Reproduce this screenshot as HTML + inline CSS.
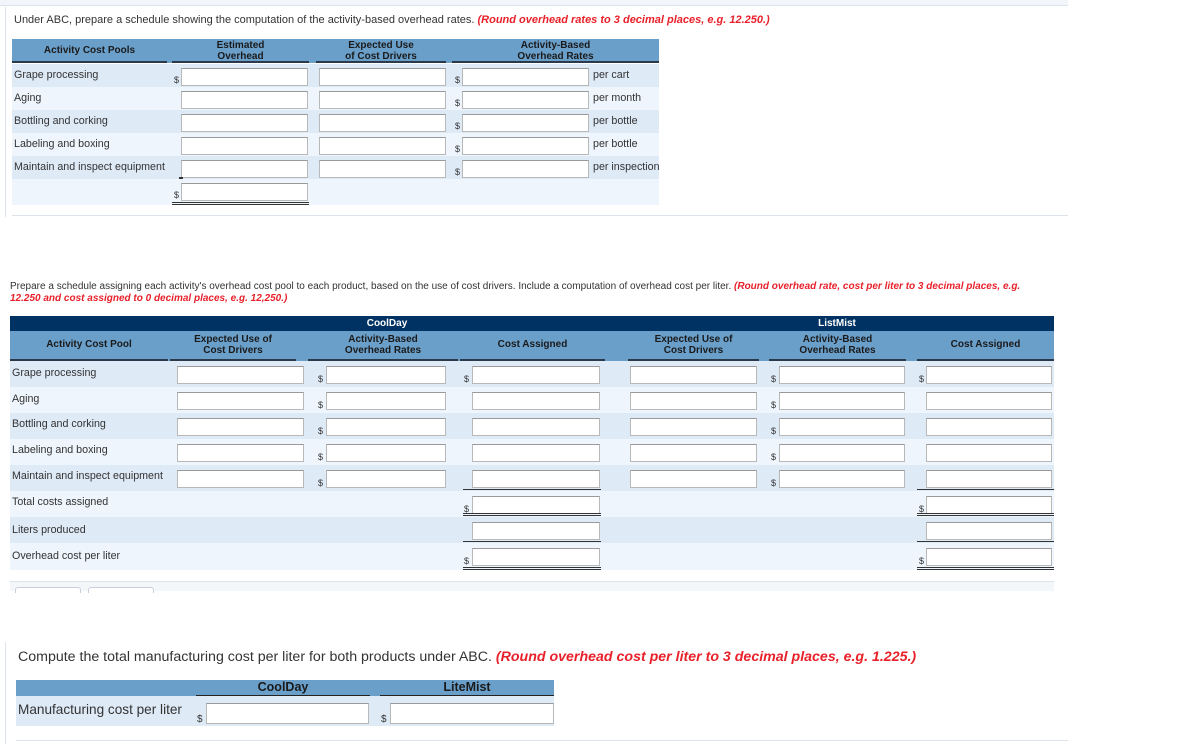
<!DOCTYPE html>
<html><head><meta charset="utf-8"><style>
*{margin:0;padding:0;box-sizing:border-box}
body{width:1202px;height:744px;background:#fff;position:relative;overflow:hidden;font-family:"Liberation Sans",sans-serif;font-size:10px;color:#333}
div,span{position:absolute}
.hd{background:#6a9fca;color:#1a1a1a;font-weight:bold;text-align:center;line-height:11px;font-size:10px}
.ul{border-bottom:2px solid #2b3a4a}
.r1{background:#dfeaf7}.r2{background:#eef5fc}
.in{background:#fff;border:1px solid #b8b8b8;border-top-color:#999;height:18px}
.d{font-size:9px;color:#333}
.red{color:#e8212b;font-weight:bold;font-style:italic}
.lb{font-size:10.7px;color:#333}
.dl{border-bottom:3px double #333}
.sl{border-bottom:1.5px solid #333}
</style></head><body>
<!-- Section 1 -->
<div style="left:0;top:0;width:1068px;height:6px;background:#f2f6fa;border-bottom:1px solid #dde3ea"></div>
<div style="left:5px;top:7px;width:1px;height:210px;background:#dde3ea"></div>
<div style="left:12px;top:215px;width:1056px;height:1px;background:#dde3ea"></div>
<div style="left:14px;top:14px;white-space:nowrap;font-size:11px">Under ABC, prepare a schedule showing the computation of the activity-based overhead rates. <span class="red" style="position:static">(Round overhead rates to 3 decimal places, e.g. 12.250.)</span></div>
<div class="hd" style="left:12px;top:39px;width:647px;height:24px"></div>
<div class="hd ul" style="left:12px;top:39px;width:155px;height:24px;line-height:24px">Activity Cost Pools</div>
<div class="hd ul" style="left:172px;top:39px;width:137px;height:24px;padding-top:1px">Estimated<br>Overhead</div>
<div class="hd ul" style="left:316px;top:39px;width:130px;height:24px;padding-top:1px">Expected Use<br>of Cost Drivers</div>
<div class="hd ul" style="left:452px;top:39px;width:207px;height:24px;padding-top:1px">Activity-Based<br>Overhead Rates</div>
<div class="r1" style="left:12px;top:64px;width:647px;height:23px"></div>
<div class="r2" style="left:12px;top:87px;width:647px;height:23px"></div>
<div class="r1" style="left:12px;top:110px;width:647px;height:23px"></div>
<div class="r2" style="left:12px;top:133px;width:647px;height:23px"></div>
<div class="r1" style="left:12px;top:156px;width:647px;height:23px"></div>
<div class="r2" style="left:12px;top:179px;width:647px;height:26px"></div>
<div class="lb" style="left:14px;top:69px">Grape processing</div>
<div class="lb" style="left:14px;top:92px">Aging</div>
<div class="lb" style="left:14px;top:115px">Bottling and corking</div>
<div class="lb" style="left:14px;top:138px">Labeling and boxing</div>
<div class="lb" style="left:14px;top:161px">Maintain and inspect equipment</div>
<div class="d" style="left:174px;top:75px">$</div>
<div class="in" style="left:181px;top:68px;width:127px"></div>
<div class="in" style="left:181px;top:91px;width:127px"></div>
<div class="in" style="left:181px;top:114px;width:127px"></div>
<div class="in" style="left:181px;top:137px;width:127px"></div>
<div class="in" style="left:181px;top:160px;width:127px"></div>
<div style="left:179px;top:177px;width:4px;height:2px;background:#333"></div>
<div class="d" style="left:174px;top:190px">$</div>
<div class="in" style="left:181px;top:183px;width:127px"></div>
<div style="left:172px;top:202px;width:137px;height:3px;border-bottom:3px double #333"></div>
<div class="in" style="left:319px;top:68px;width:127px"></div>
<div class="in" style="left:319px;top:91px;width:127px"></div>
<div class="in" style="left:319px;top:114px;width:127px"></div>
<div class="in" style="left:319px;top:137px;width:127px"></div>
<div class="in" style="left:319px;top:160px;width:127px"></div>
<div class="d" style="left:455px;top:75px">$</div><div class="d" style="left:455px;top:98px">$</div><div class="d" style="left:455px;top:121px">$</div><div class="d" style="left:455px;top:144px">$</div><div class="d" style="left:455px;top:167px">$</div>
<div class="in" style="left:462px;top:68px;width:127px"></div>
<div class="in" style="left:462px;top:91px;width:127px"></div>
<div class="in" style="left:462px;top:114px;width:127px"></div>
<div class="in" style="left:462px;top:137px;width:127px"></div>
<div class="in" style="left:462px;top:160px;width:127px"></div>
<div class="lb" style="left:593px;top:69px">per cart</div>
<div class="lb" style="left:593px;top:92px">per month</div>
<div class="lb" style="left:593px;top:115px">per bottle</div>
<div class="lb" style="left:593px;top:138px">per bottle</div>
<div class="lb" style="left:593px;top:161px">per inspection</div>

<!-- Section 2 -->
<div style="left:10px;top:281px;width:1030px;line-height:12px">Prepare a schedule assigning each activity's overhead cost pool to each product, based on the use of cost drivers. Include a computation of overhead cost per liter. <span class="red" style="position:static">(Round overhead rate, cost per liter to 3 decimal places, e.g. 12.250 and cost assigned to 0 decimal places, e.g. 12,250.)</span></div>
<div style="left:10px;top:316px;width:1044px;height:15px;background:#003264"></div>
<div style="left:312px;top:318px;width:150px;text-align:center;color:#fff;font-weight:bold;font-size:10px">CoolDay</div>
<div style="left:767px;top:318px;width:140px;text-align:center;color:#fff;font-weight:bold;font-size:10px">ListMist</div>
<div class="hd" style="left:10px;top:331px;width:1044px;height:30px"></div>
<div class="hd ul" style="left:10px;top:331px;width:158px;height:30px;line-height:28px">Activity Cost Pool</div>
<div class="hd ul" style="left:170px;top:331px;width:126px;height:30px;padding-top:3px">Expected Use of<br>Cost Drivers</div>
<div class="hd ul" style="left:308px;top:331px;width:150px;height:30px;padding-top:3px">Activity-Based<br>Overhead Rates</div>
<div class="hd ul" style="left:460px;top:331px;width:145px;height:30px;line-height:28px">Cost Assigned</div>
<div class="hd ul" style="left:628px;top:331px;width:131px;height:30px;padding-top:3px">Expected Use of<br>Cost Drivers</div>
<div class="hd ul" style="left:769px;top:331px;width:137px;height:30px;padding-top:3px">Activity-Based<br>Overhead Rates</div>
<div class="hd ul" style="left:917px;top:331px;width:137px;height:30px;line-height:28px">Cost Assigned</div>
<div class="r1" style="left:10px;top:361px;width:1044px;height:26px"></div>
<div class="r2" style="left:10px;top:387px;width:1044px;height:26px"></div>
<div class="r1" style="left:10px;top:413px;width:1044px;height:26px"></div>
<div class="r2" style="left:10px;top:439px;width:1044px;height:26px"></div>
<div class="r1" style="left:10px;top:465px;width:1044px;height:26px"></div>
<div class="r2" style="left:10px;top:491px;width:1044px;height:26px"></div>
<div class="r1" style="left:10px;top:517px;width:1044px;height:26px"></div>
<div class="r2" style="left:10px;top:543px;width:1044px;height:27px"></div>
<div class="lb" style="left:12px;top:367px">Grape processing</div>
<div class="lb" style="left:12px;top:393px">Aging</div>
<div class="lb" style="left:12px;top:418px">Bottling and corking</div>
<div class="lb" style="left:12px;top:444px">Labeling and boxing</div>
<div class="lb" style="left:12px;top:470px">Maintain and inspect equipment</div>
<div class="lb" style="left:12px;top:496px">Total costs assigned</div>
<div class="lb" style="left:12px;top:524px">Liters produced</div>
<div class="lb" style="left:12px;top:550px">Overhead cost per liter</div>
<div class="in" style="left:177px;top:366px;width:127px"></div>
<div class="in" style="left:177px;top:392px;width:127px"></div>
<div class="in" style="left:177px;top:418px;width:127px"></div>
<div class="in" style="left:177px;top:444px;width:127px"></div>
<div class="in" style="left:177px;top:470px;width:127px"></div>
<div class="d" style="left:318px;top:374px">$</div><div class="d" style="left:318px;top:400px">$</div><div class="d" style="left:318px;top:426px">$</div><div class="d" style="left:318px;top:452px">$</div><div class="d" style="left:318px;top:478px">$</div>
<div class="in" style="left:326px;top:366px;width:120px"></div>
<div class="in" style="left:326px;top:392px;width:120px"></div>
<div class="in" style="left:326px;top:418px;width:120px"></div>
<div class="in" style="left:326px;top:444px;width:120px"></div>
<div class="in" style="left:326px;top:470px;width:120px"></div>
<div class="d" style="left:464px;top:374px">$</div>
<div class="in" style="left:472px;top:366px;width:128px"></div>
<div class="in" style="left:472px;top:392px;width:128px"></div>
<div class="in" style="left:472px;top:418px;width:128px"></div>
<div class="in" style="left:472px;top:444px;width:128px"></div>
<div class="in" style="left:472px;top:470px;width:128px"></div>
<div class="sl" style="left:463px;top:488px;width:138px;height:2px"></div>
<div class="d" style="left:464px;top:504px">$</div>
<div class="in" style="left:472px;top:496px;width:128px"></div>
<div class="dl" style="left:463px;top:512px;width:138px;height:4px"></div>
<div class="in" style="left:472px;top:522px;width:128px"></div>
<div class="sl" style="left:463px;top:540px;width:138px;height:2px"></div>
<div class="d" style="left:464px;top:556px">$</div>
<div class="in" style="left:472px;top:548px;width:128px"></div>
<div class="dl" style="left:463px;top:566px;width:138px;height:4px"></div>
<div class="in" style="left:630px;top:366px;width:127px"></div>
<div class="in" style="left:630px;top:392px;width:127px"></div>
<div class="in" style="left:630px;top:418px;width:127px"></div>
<div class="in" style="left:630px;top:444px;width:127px"></div>
<div class="in" style="left:630px;top:470px;width:127px"></div>
<div class="d" style="left:771px;top:374px">$</div><div class="d" style="left:771px;top:400px">$</div><div class="d" style="left:771px;top:426px">$</div><div class="d" style="left:771px;top:452px">$</div><div class="d" style="left:771px;top:478px">$</div>
<div class="in" style="left:779px;top:366px;width:126px"></div>
<div class="in" style="left:779px;top:392px;width:126px"></div>
<div class="in" style="left:779px;top:418px;width:126px"></div>
<div class="in" style="left:779px;top:444px;width:126px"></div>
<div class="in" style="left:779px;top:470px;width:126px"></div>
<div class="d" style="left:919px;top:374px">$</div>
<div class="in" style="left:926px;top:366px;width:126px"></div>
<div class="in" style="left:926px;top:392px;width:126px"></div>
<div class="in" style="left:926px;top:418px;width:126px"></div>
<div class="in" style="left:926px;top:444px;width:126px"></div>
<div class="in" style="left:926px;top:470px;width:126px"></div>
<div class="sl" style="left:917px;top:488px;width:137px;height:2px"></div>
<div class="d" style="left:919px;top:504px">$</div>
<div class="in" style="left:926px;top:496px;width:126px"></div>
<div class="dl" style="left:917px;top:512px;width:137px;height:4px"></div>
<div class="in" style="left:926px;top:522px;width:126px"></div>
<div class="sl" style="left:917px;top:540px;width:137px;height:2px"></div>
<div class="d" style="left:919px;top:556px">$</div>
<div class="in" style="left:926px;top:548px;width:126px"></div>
<div class="dl" style="left:917px;top:566px;width:137px;height:4px"></div>
<div style="left:10px;top:581px;width:1044px;height:10px;background:#f4f7fa;border-top:1px solid #dde3ea"></div>
<div style="left:15px;top:587px;width:66px;height:6px;border:1px solid #ccd;border-bottom:none;border-radius:3px 3px 0 0;background:#fff"></div>
<div style="left:88px;top:587px;width:66px;height:6px;border:1px solid #ccd;border-bottom:none;border-radius:3px 3px 0 0;background:#fff"></div>

<!-- Section 3 -->
<div style="left:5px;top:642px;width:1px;height:102px;background:#dde3ea"></div>
<div style="left:16px;top:740px;width:1052px;height:1px;background:#dde3ea"></div>
<div style="left:18px;top:649px;font-size:14.2px;white-space:nowrap">Compute the total manufacturing cost per liter for both products under ABC. <span class="red" style="position:static">(Round overhead cost per liter to 3 decimal places, e.g. 1.225.)</span></div>
<div class="hd" style="left:16px;top:680px;width:538px;height:16px"></div>
<div class="hd" style="left:196px;top:680px;width:174px;height:16px;font-size:12.5px;line-height:15px;border-bottom:1.5px solid #222">CoolDay</div>
<div class="hd" style="left:380px;top:680px;width:174px;height:16px;font-size:12.5px;line-height:15px;border-bottom:1.5px solid #222">LiteMist</div>
<div class="r1" style="left:16px;top:696px;width:538px;height:30px"></div>
<div style="left:18px;top:702px;font-size:13.6px">Manufacturing cost per liter</div>
<div class="d" style="left:197px;top:714px;font-size:10px">$</div>
<div class="in" style="left:206px;top:703px;width:163px;height:21px"></div>
<div class="d" style="left:381px;top:714px;font-size:10px">$</div>
<div class="in" style="left:390px;top:703px;width:164px;height:21px"></div>
</body></html>
